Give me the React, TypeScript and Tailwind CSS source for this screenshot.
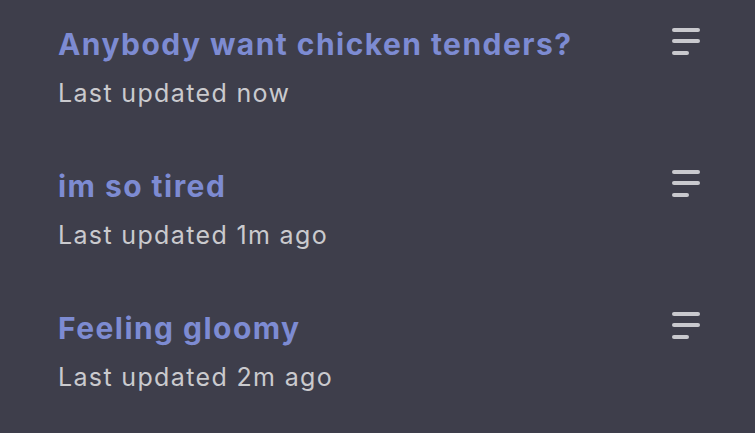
const notes = [
  { title: "Anybody want chicken tenders?", updated: "now" },
  { title: "im so tired", updated: "1m ago" },
  { title: "Feeling gloomy", updated: "2m ago" },
];

function MenuIcon() {
  return (
    <svg width="28" height="28" viewBox="0 0 28 28" fill="none" stroke="#c9c9ce" strokeWidth="4" strokeLinecap="round">
      <line x1="2" y1="2" x2="26" y2="2" />
      <line x1="2" y1="13" x2="26" y2="13" />
      <line x1="2" y1="25" x2="15" y2="25" />
    </svg>
  );
}

export default function App() {
  return (
    <div
      className="w-[755px] h-[433px] bg-[#3e3e4b] pl-[58px] pr-[55px] pt-[26px] flex flex-col gap-[60px]"
      style={{ fontFamily: "Inter, 'Noto Sans', sans-serif" }}
    >
      {notes.map((note) => (
        <div key={note.title} className="flex items-start justify-between">
          <div className="flex flex-col">
            <h2 className="text-[30px] leading-[36px] font-bold tracking-[1.45px] text-[#7d8bd2] whitespace-nowrap">
              {note.title}
            </h2>
            <p className="text-[25px] leading-[30px] mt-[16px] tracking-[1.35px] text-[#cacace] whitespace-nowrap">
              Last updated {note.updated}
            </p>
          </div>
          <div className="mt-[2px]">
            <MenuIcon />
          </div>
        </div>
      ))}
    </div>
  );
}
